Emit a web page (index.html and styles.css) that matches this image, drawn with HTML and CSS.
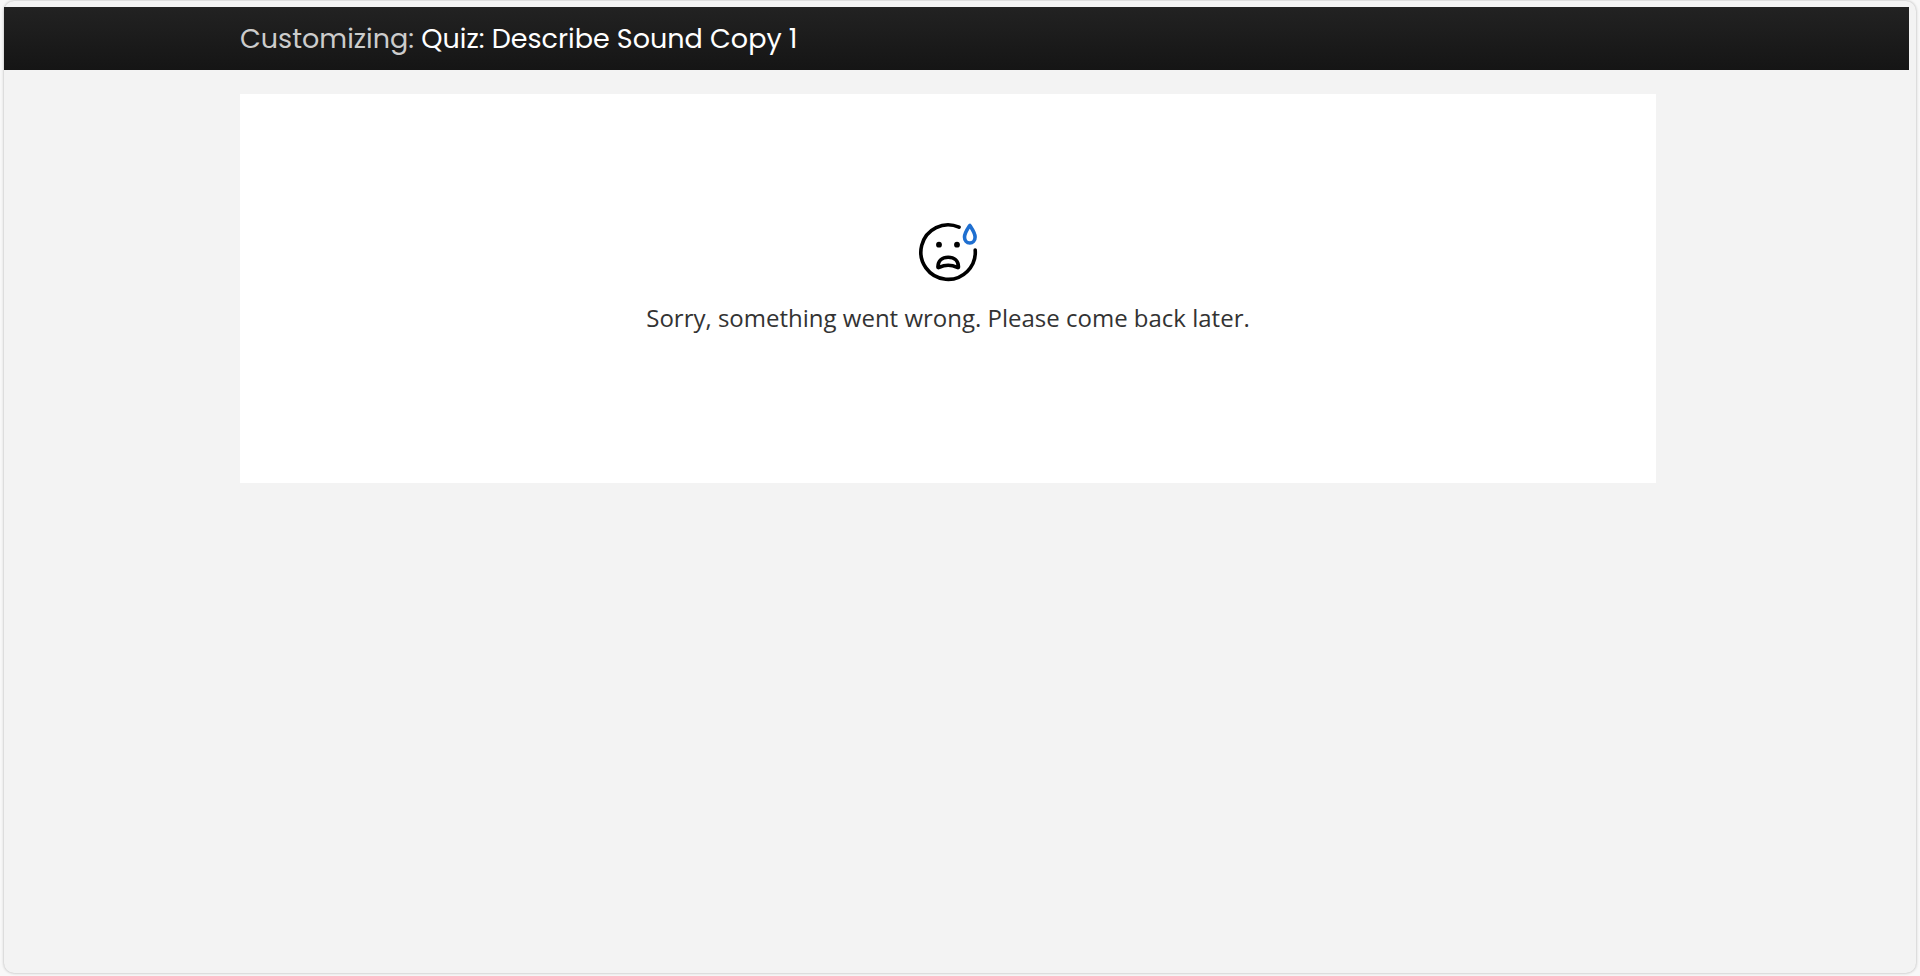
FILE: index.html
```html
<!DOCTYPE html>
<html lang="en">
<head>
    <meta charset="UTF-8">
    <meta name="viewport" content="width=device-width, initial-scale=1.0">
    <title>Customizing: Quiz: Describe Sound Copy 1</title>
    <link rel="stylesheet" href="styles.css">
</head>
<body>
    <div class="frame">
        <header class="header">
            <h1 class="title">Customizing: <span class="title-name">Quiz: Describe Sound Copy 1</span></h1>
        </header>

        <main class="card">
            <svg class="error-icon" viewBox="0 0 60 60" fill="none" stroke-width="3.6" stroke-linecap="round" stroke-linejoin="round" aria-hidden="true">
                <!-- Face -->
                <path stroke="#000" d="M41 5.2A27.2 27.2 0 1 0 57.2 28"/>
                <circle cx="21" cy="22.7" r="2.9" fill="#000"/>
                <circle cx="39" cy="22.7" r="2.9" fill="#000"/>
                <path stroke="#000" d="M19.9 45C19.9 38.9 24.1 35.3 30.2 35.3S40.5 38.9 40.5 45Q40.5 46 39.2 45.4C33.5 42.6 26.9 42.6 21.2 45.4Q19.9 46 19.9 45Z"/>
                <!-- Sweat drop -->
                <path stroke="#1f6fd0" d="M51.8 3.4C49.5 6.9 46.5 11.2 46.5 15C46.5 18.6 48.8 21 51.8 21S57.1 18.6 57.1 15C57.1 11.2 54.1 6.9 51.8 3.4Z"/>
            </svg>
            <p class="message">Sorry, something went wrong. Please come back later.</p>
        </main>
    </div>
</body>
</html>
```

FILE: styles.css
```css
* {
    box-sizing: border-box;
}
body {
    margin: 0;
    padding: 1px 4px 3px;
    min-height: 100vh;
    display: flex;
    background-color: #f8f8f8;
    font-family: "Open Sans", sans-serif;
}
.frame {
    flex: 1;
    padding: 6px 7px 24px 0;
    border-radius: 10px;
    background-color: #f3f3f3;
    box-shadow: 0 0 3px rgba(0, 0, 0, 0.3);
}
.header {
    padding: 11px 236px 10px;
    background: linear-gradient(#222, #151515);
}
.title {
    margin: 0;
    font-family: Poppins, Inter, sans-serif;
    font-size: 27px;
    font-weight: 400;
    line-height: 42px;
    color: #ccc;
}
.title-name {
    color: #fff;
}
.card {
    display: flex;
    flex-direction: column;
    align-items: center;
    margin: 24px 253px 0 236px;
    padding: 128px 24px;
    background-color: #fff;
}
.error-icon {
    width: 60px;
    height: 60px;
}
.message {
    margin: 20px 0 21px;
    font-size: 24px;
    line-height: 32px;
    color: #333;
    text-align: center;
}
```
